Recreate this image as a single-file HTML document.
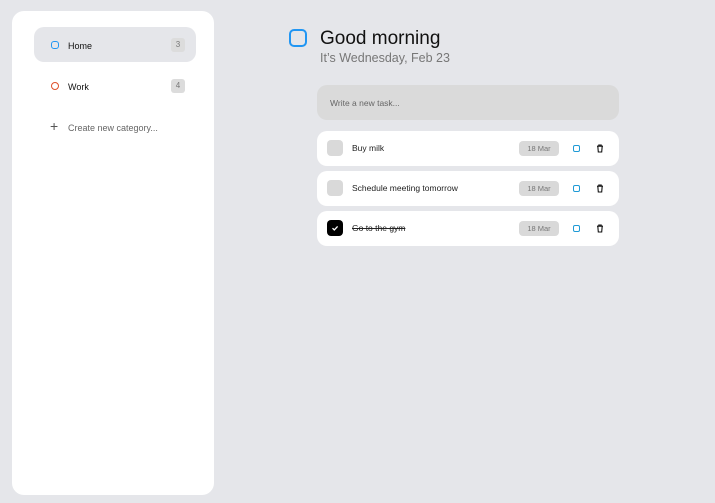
<!DOCTYPE html>
<html><head><style>
*{margin:0;padding:0;box-sizing:border-box}
body{width:715px;height:503px;background:#e5e6ea;font-family:"Liberation Sans",sans-serif;position:relative;overflow:hidden}
.side{position:absolute;left:12px;top:11px;width:202px;height:484px;background:#fff;border-radius:12px}
.cat{position:absolute;left:22px;width:162px;height:35px;border-radius:10px;font-size:9px;color:#111}
.cat .ic{position:absolute;left:17px;top:14px;width:8px;height:8px;border:1.3px solid;border-radius:3px}
.cat .t{position:absolute;left:34px;top:14px}
.cat .b{position:absolute;left:137px;top:11px;width:14px;height:14px;background:#dcdcdc;border-radius:3px;font-size:8px;color:#777;text-align:center;line-height:14px}
.h1{position:absolute;left:320px;top:28px;font-size:19px;color:#111}
.sub{position:absolute;left:320px;top:51px;font-size:12.5px;color:#777}
.hic{position:absolute;left:289px;top:29px;width:18px;height:18px;border:2.6px solid #2196f3;border-radius:5px}
.inp{position:absolute;left:317px;top:85px;width:302px;height:35px;background:#dadada;border-radius:10px;font-size:8.5px;color:#666;padding:13px 0 0 13px}
.task{position:absolute;left:317px;width:302px;height:35px;background:#fff;border-radius:10px;font-size:8.5px;color:#222}
.cb{position:absolute;left:10px;top:9px;width:16px;height:16px;background:#d9d9d9;border-radius:4px}
.tx{position:absolute;left:35px;top:12px}
.dt{position:absolute;left:202px;top:10px;width:40px;height:15px;background:#d9d9d9;border-radius:4px;font-size:7.5px;color:#777;text-align:center;line-height:15px}
.sq{position:absolute;left:256px;top:14px;width:7px;height:7px;border:1.2px solid #1e9ad6;border-radius:2px}
.tr{position:absolute;left:279px;top:13px}
</style></head><body>
<div class="side">
 <div class="cat" style="top:16px;background:#e5e6ea"><div class="ic" style="border-color:#2196f3"></div><div class="t">Home</div><div class="b">3</div></div>
 <div class="cat" style="top:57px"><div class="ic" style="border-color:#e0502a;border-radius:4px"></div><div class="t">Work</div><div class="b">4</div></div>
 <div class="cat" style="top:98px;color:#666"><div style="position:absolute;left:16px;top:9px;font-size:14px;color:#555">+</div><div class="t">Create new category...</div></div>
</div>
<div class="hic"></div>
<div class="h1">Good morning</div>
<div class="sub">It’s Wednesday, Feb 23</div>
<div class="inp">Write a new task...</div>
<div class="task" style="top:131px"><div class="cb"></div><div class="tx">Buy milk</div><div class="dt">18 Mar</div><div class="sq"></div>
<svg class="tr" width="8" height="9" viewBox="0 0 8 9"><path d="M1 2.2h6M2.8 2.2V1h2.4v1.2M1.8 2.2l.5 5.8h3.4l.5-5.8" fill="none" stroke="#111" stroke-width="1.1"/></svg></div>
<div class="task" style="top:171px"><div class="cb"></div><div class="tx">Schedule meeting tomorrow</div><div class="dt">18 Mar</div><div class="sq"></div>
<svg class="tr" width="8" height="9" viewBox="0 0 8 9"><path d="M1 2.2h6M2.8 2.2V1h2.4v1.2M1.8 2.2l.5 5.8h3.4l.5-5.8" fill="none" stroke="#111" stroke-width="1.1"/></svg></div>
<div class="task" style="top:211px"><div class="cb" style="background:#000"><svg width="16" height="16" viewBox="0 0 16 16"><path d="M5.5 8.2l1.8 1.7 3.3-3.5" fill="none" stroke="#fff" stroke-width="1.3"/></svg></div><div class="tx" style="text-decoration:line-through">Go to the gym</div><div class="dt">18 Mar</div><div class="sq"></div>
<svg class="tr" width="8" height="9" viewBox="0 0 8 9"><path d="M1 2.2h6M2.8 2.2V1h2.4v1.2M1.8 2.2l.5 5.8h3.4l.5-5.8" fill="none" stroke="#111" stroke-width="1.1"/></svg></div>
</body></html>
